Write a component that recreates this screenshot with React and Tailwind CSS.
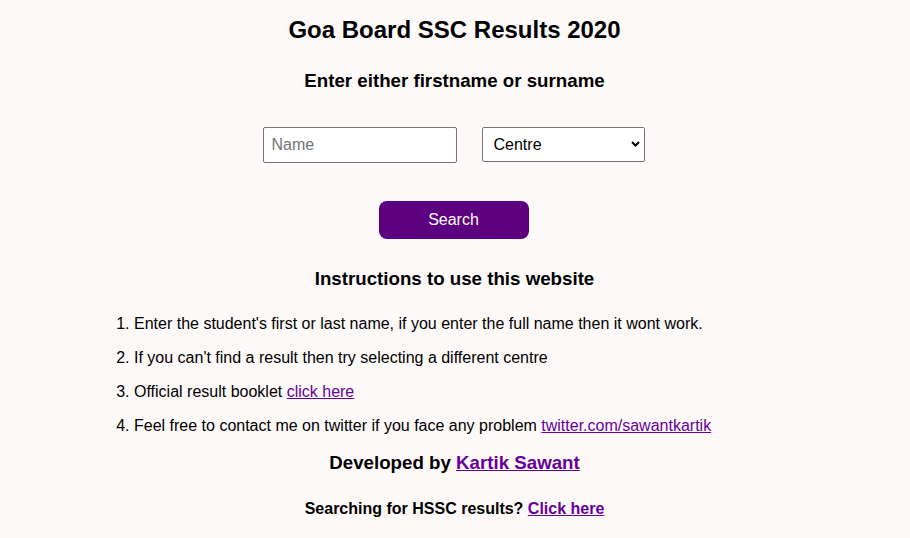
import React, { useState } from "react";

const font = { fontFamily: '"Liberation Sans", Arial, sans-serif' };

const App = () => {
  const [name, setName] = useState("");
  const [centre, setCentre] = useState("");

  return (
    <div className="min-h-[538px] bg-[#fdf9f8] text-black" style={font}>
      <div className="w-[909px] pt-4 pb-4">
        <h1 className="text-center text-[24px] leading-[28px] font-bold">
          Goa Board SSC Results 2020
        </h1>
        <h2 className="mt-[26px] text-center text-[18.72px] leading-[22px] font-bold">
          Enter either firstname or surname
        </h2>

        <div className="mt-[35px] flex justify-center gap-[25px] pr-[2px]">
          <input
            className="w-[194px] h-[36px] bg-white border border-[#767676] rounded-[2px] pl-[8px] text-[16px] placeholder:text-[#757575] outline-none"
            placeholder="Name"
            value={name}
            onChange={(e) => setName(e.target.value)}
          />
          <div className="relative w-[163px] h-[35px]">
            <select
              className="appearance-none w-full h-full bg-white border border-[#767676] rounded-[2px] pl-[11px] text-[16px] outline-none"
              value={centre}
              onChange={(e) => setCentre(e.target.value)}
            >
              <option value="">Centre</option>
            </select>
            {/* chevron */}
            <svg
              className="absolute right-[5px] top-[14px] pointer-events-none"
              width="9"
              height="6"
              viewBox="0 0 9 6"
            >
              <path d="M1 1 L4.5 4.5 L8 1" fill="none" stroke="#000" strokeWidth="2" />
            </svg>
          </div>
        </div>

        <div className="mt-[38px] flex justify-center pr-[2px]">
          <button className="w-[150px] h-[38px] rounded-[8px] bg-[#5c0080] text-white text-[16px]">
            Search
          </button>
        </div>

        <h2 className="mt-[29px] text-center text-[18.72px] leading-[22px] font-bold">
          Instructions to use this website
        </h2>

        <ol className="mt-[25px] ml-[134px] list-decimal text-[16px] leading-[18px] flex flex-col gap-[16px]">
          <li>
            Enter the student's first or last name, if you enter the full name
            then it wont work.
          </li>
          <li>If you can't find a result then try selecting a different centre</li>
          <li>
            Official result booklet{" "}
            <a href="#" className="text-[#660099] underline">
              click here
            </a>
          </li>
          <li>
            Feel free to contact me on twitter if you face any problem{" "}
            <a href="#" className="text-[#660099] underline">
              twitter.com/sawantkartik
            </a>
          </li>
        </ol>

        <p className="mt-[17px] text-center text-[18.72px] leading-[22px] font-bold">
          Developed by{" "}
          <a href="#" className="text-[#660099] underline">
            Kartik Sawant
          </a>
        </p>

        <p className="mt-[26px] text-center text-[16px] leading-[18px] font-bold">
          Searching for HSSC results?{" "}
          <a href="#" className="text-[#660099] underline">
            Click here
          </a>
        </p>
      </div>
    </div>
  );
};

export default App;
